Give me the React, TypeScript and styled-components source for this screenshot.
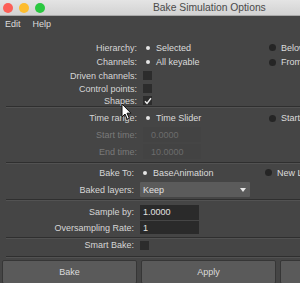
import React from "react";
import styled, { createGlobalStyle } from "styled-components";

const Global = createGlobalStyle`
  html, body { margin: 0; padding: 0; background: #454545; }
  body {
    width: 300px; height: 283px; overflow: hidden;
    font-family: "Liberation Sans", Arial, sans-serif;
  }
`;

const Window = styled.div`
  position: relative;
  width: 300px;
  height: 283px;
  overflow: hidden;
  background: #454545;
  display: flex;
  flex-direction: column;
`;

const TitleBar = styled.div`
  height: 16px;
  flex: none;
  box-sizing: border-box;
  background: linear-gradient(#e4e4e4, #d2d2d2);
  border-bottom: 1px solid #a9a9a9;
  display: flex;
  align-items: center;
  padding-left: 3px;
`;

const Lights = styled.div`
  display: flex;
  gap: 6px;
`;

const Light = styled.span<{ $c: string }>`
  width: 10px;
  height: 10px;
  border-radius: 50%;
  background: ${(p) => p.$c};
`;

const Title = styled.div`
  margin-left: 108px;
  font-size: 10.3px;
  color: #4a4a4a;
  white-space: nowrap;
`;

const MenuBar = styled.div`
  height: 16px;
  flex: none;
  display: flex;
  align-items: center;
  gap: 12px;
  padding-left: 5px;
  font-size: 9px;
  color: #dcdcdc;
`;

const Content = styled.div`
  padding-top: 8px;
  display: flex;
  flex-direction: column;
`;

const Row = styled.div<{ $h: number; $lw: number; $gap: number; $mt?: number }>`
  height: ${(p) => p.$h}px;
  margin-top: ${(p) => p.$mt ?? 0}px;
  display: grid;
  grid-template-columns: ${(p) => p.$lw}px 1fr;
  column-gap: ${(p) => p.$gap}px;
  align-items: center;
  font-size: 9px;
  white-space: nowrap;
`;

const Label = styled.div<{ $dim?: boolean }>`
  text-align: right;
  color: ${(p) => (p.$dim ? "#7a7a7a" : "#d6d6d6")};
`;

const Controls = styled.div`
  display: flex;
  align-items: center;
`;

const Option = styled.div<{ $w?: number }>`
  display: flex;
  align-items: center;
  gap: 4px;
  width: ${(p) => (p.$w ? `${p.$w}px` : "auto")};
  color: #dcdcdc;
`;

const RadioBox = styled.span<{ $on?: boolean }>`
  width: 9px;
  height: 9px;
  display: flex;
  align-items: center;
  justify-content: center;
  flex: none;
  &::after {
    content: "";
    width: ${(p) => (p.$on ? 4 : 7)}px;
    height: ${(p) => (p.$on ? 4 : 7)}px;
    border-radius: 50%;
    background: ${(p) => (p.$on ? "#e6e6e6" : "#252525")};
  }
`;

const CheckBox = styled.span`
  width: 9px;
  height: 9px;
  background: #2c2c2c;
  display: flex;
  align-items: center;
  justify-content: center;
`;

const Field = styled.div<{ $w: number; $h: number; $dim?: boolean }>`
  width: ${(p) => p.$w}px;
  height: ${(p) => p.$h}px;
  box-sizing: border-box;
  background: ${(p) => (p.$dim ? "#434343" : "#2a2a2a")};
  color: ${(p) => (p.$dim ? "#6c6c6c" : "#e2e2e2")};
  padding-left: ${(p) => (p.$dim ? 8 : 3)}px;
  display: flex;
  align-items: center;
`;

const Dropdown = styled.div`
  width: 110px;
  height: 15px;
  box-sizing: border-box;
  background: #5b5b5b;
  color: #e2e2e2;
  padding: 0 4px 0 3px;
  display: flex;
  align-items: center;
  justify-content: space-between;
  border-radius: 1px;
`;

const Arrow = styled.span`
  width: 0;
  height: 0;
  border-left: 3px solid transparent;
  border-right: 3px solid transparent;
  border-top: 4px solid #e8e8e8;
`;

const Separator = styled.div<{ $mt?: number }>`
  margin-top: ${(p) => p.$mt ?? 0}px;
  margin-left: 6px;
  height: 2px;
  box-sizing: border-box;
  border-top: 1px solid #2f2f2f;
  border-bottom: 1px solid #525252;
`;

const ButtonBar = styled.div`
  margin-top: 2px;
  display: flex;
  gap: 4px;
  padding-left: 2px;
`;

const Button = styled.div`
  width: 135px;
  height: 24px;
  flex: none;
  box-sizing: border-box;
  background: #5a5a5a;
  border: 1px solid #363636;
  border-radius: 2px;
  color: #dcdcdc;
  font-size: 9px;
  display: flex;
  align-items: center;
  justify-content: center;
`;

const Cursor = styled.svg`
  position: absolute;
  left: 121px;
  top: 103px;
`;

const U = { lw: 137, gap: 6 };
const L = { lw: 134, gap: 6 };

const Check = () => (
  <svg width="8" height="8" viewBox="0 0 8 8">
    <path d="M1 4.2 L3 6.4 L7 1.2" fill="none" stroke="#f0f0f0" strokeWidth="1.4" />
  </svg>
);

export default function App() {
  return (
    <Window>
      <Global />
      <TitleBar>
        <Lights>
          <Light $c="#fc5f57" />
          <Light $c="#fdbc2e" />
          <Light $c="#2ac840" />
        </Lights>
        <Title>Bake Simulation Options</Title>
      </TitleBar>
      <MenuBar>
        <span>Edit</span>
        <span>Help</span>
      </MenuBar>
      <Content>
        <Row $h={15} $lw={U.lw} $gap={U.gap}>
          <Label>Hierarchy:</Label>
          <Controls>
            <Option $w={125}><RadioBox $on />Selected</Option>
            <Option><RadioBox />Below</Option>
          </Controls>
        </Row>
        <Row $h={14} $lw={U.lw} $gap={U.gap}>
          <Label>Channels:</Label>
          <Controls>
            <Option $w={125}><RadioBox $on />All keyable</Option>
            <Option><RadioBox />From Channel Box</Option>
          </Controls>
        </Row>
        <Row $h={13} $lw={U.lw} $gap={U.gap}>
          <Label>Driven channels:</Label>
          <Controls><CheckBox /></Controls>
        </Row>
        <Row $h={13} $lw={U.lw} $gap={U.gap}>
          <Label>Control points:</Label>
          <Controls><CheckBox /></Controls>
        </Row>
        <Row $h={11} $lw={U.lw} $gap={U.gap}>
          <Label>Shapes:</Label>
          <Controls><CheckBox><Check /></CheckBox></Controls>
        </Row>
        <Separator />
        <Row $h={16} $lw={U.lw} $gap={U.gap} $mt={2}>
          <Label>Time range:</Label>
          <Controls>
            <Option $w={125}><RadioBox $on />Time Slider</Option>
            <Option><RadioBox />Start/End</Option>
          </Controls>
        </Row>
        <Row $h={17} $lw={U.lw} $gap={U.gap}>
          <Label $dim>Start time:</Label>
          <Controls><Field $w={58} $h={15} $dim>0.0000</Field></Controls>
        </Row>
        <Row $h={17} $lw={U.lw} $gap={U.gap}>
          <Label $dim>End time:</Label>
          <Controls><Field $w={58} $h={15} $dim>10.0000</Field></Controls>
        </Row>
        <Separator $mt={2} />
        <Row $h={17} $lw={L.lw} $gap={L.gap}>
          <Label>Bake To:</Label>
          <Controls>
            <Option $w={124}><RadioBox $on />BaseAnimation</Option>
            <Option><RadioBox />New Layer</Option>
          </Controls>
        </Row>
        <Row $h={17} $lw={L.lw} $gap={L.gap}>
          <Label>Baked layers:</Label>
          <Controls>
            <Dropdown>
              <span>Keep</span>
              <Arrow />
            </Dropdown>
          </Controls>
        </Row>
        <Separator $mt={1} />
        <Row $h={16} $lw={L.lw} $gap={L.gap} $mt={3}>
          <Label>Sample by:</Label>
          <Controls><Field $w={59} $h={15}>1.0000</Field></Controls>
        </Row>
        <Row $h={15} $lw={L.lw} $gap={L.gap}>
          <Label>Oversampling Rate:</Label>
          <Controls><Field $w={59} $h={13}>1</Field></Controls>
        </Row>
        <Separator $mt={2} />
        <Row $h={12} $lw={L.lw} $gap={L.gap}>
          <Label>Smart Bake:</Label>
          <Controls><CheckBox /></Controls>
        </Row>
        <Separator $mt={5} />
        <ButtonBar>
          <Button>Bake</Button>
          <Button>Apply</Button>
          <Button>Close</Button>
        </ButtonBar>
      </Content>
      <Cursor width="12" height="18" viewBox="0 0 12 18">
        <path
          d="M1 1 L1 14 L4 11 L6.3 16.2 L8.3 15.3 L6 10.2 L10 10.2 Z"
          fill="#ffffff"
          stroke="#111"
          strokeWidth="1"
          strokeLinejoin="round"
        />
      </Cursor>
    </Window>
  );
}
